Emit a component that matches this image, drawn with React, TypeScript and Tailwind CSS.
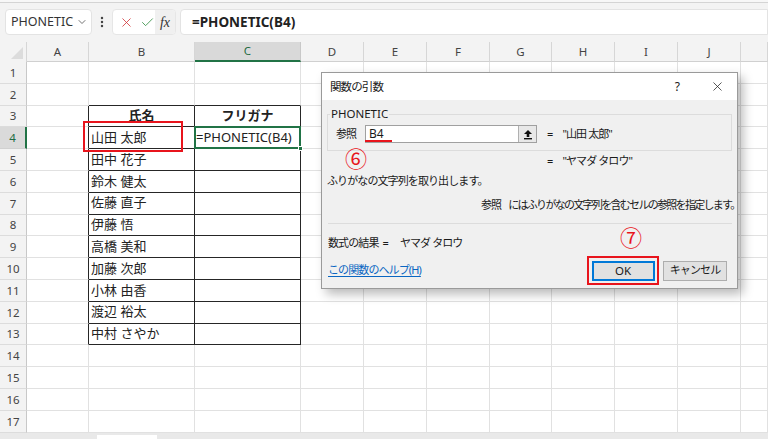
import React from 'react'
import { ChevronDown, EllipsisVertical, X, Check } from 'lucide-react'

const names = [
  '山田 太郎',
  '田中 花子',
  '鈴木 健太',
  '佐藤 直子',
  '伊藤 悟',
  '高橋 美和',
  '加藤 次郎',
  '小林 由香',
  '渡辺 裕太',
  '中村 さやか',
]

const cols = ['A', 'B', 'C', 'D', 'E', 'F', 'G', 'H', 'I', 'J', '']
const gridCols =
  'grid grid-cols-[27px_62px_106px_106px_63px_63px_63px_62px_63px_63px_63px_1fr]'

const UploadIcon = () => (
  <svg width="10" height="11" viewBox="0 0 10 11">
    <path d="M5 1 L9 5 L6.3 5 L6.3 8 L3.7 8 L3.7 5 L1 5 Z" fill="#111" />
    <rect x="1" y="9" width="8" height="1.4" fill="#111" />
  </svg>
)

const Cell: React.FC<{ row: number; col: number }> = ({ row, col }) => {
  // col: 0=A, 1=B, 2=C ...
  const inTable = row >= 3 && row <= 13
  const rightBlack = inTable && col <= 2
  const bottomBlack = row >= 2 && row <= 13 && (col === 1 || col === 2)
  const cls = [
    'relative border-r border-b bg-white flex items-center text-[13px] text-[#222] whitespace-nowrap',
    rightBlack ? 'border-r-[#262626]' : 'border-r-[#e1e1e1]',
    bottomBlack ? 'border-b-[#262626]' : 'border-b-[#e1e1e1]',
  ].join(' ')

  let content: React.ReactNode = null
  if (row === 3 && col === 1) content = <span className="w-full text-center font-bold">氏名</span>
  if (row === 3 && col === 2) content = <span className="w-full text-center font-bold">フリガナ</span>
  if (row >= 4 && row <= 13 && col === 1) content = <span className="pl-[2px]">{names[row - 4]}</span>
  if (row === 4 && col === 2) content = <span className="pl-[1px] text-[13px]">=PHONETIC(B4)</span>

  return (
    <div className={cls}>
      {content}
      {row === 4 && col === 1 && (
        <div className="absolute z-10 left-[-6px] top-[-6px] w-[100px] h-[31px] border-[2.5px] border-[#e8141c]" />
      )}
      {row === 4 && col === 2 && (
        <div className="absolute z-10 left-[-1px] top-[-1px] right-[-1px] bottom-[-1px] border-2 border-[#217346]">
          <div className="absolute right-[-4px] bottom-[-4px] w-[5px] h-[5px] bg-[#217346] border border-white" />
        </div>
      )}
    </div>
  )
}

const Dialog: React.FC = () => (
  <div className="absolute z-20 left-[321px] top-[72px] w-[417px] h-[217px] bg-[#f0f0f0] border border-[#9a9a9a] shadow-[5px_5px_10px_rgba(0,0,0,0.28)] text-[11px] tracking-[-0.9px] text-[#1a1a1a] whitespace-nowrap">
    <div className="h-[27px] bg-white flex items-center pl-[8px] pr-[12px]">
      <span className="text-[11.5px]">関数の引数</span>
      <span className="ml-auto mr-[30px] text-[12px] tracking-normal">?</span>
      <X size={15} strokeWidth={1.2} className="text-[#222]" />
    </div>

    <div className="px-[5px] pt-[14px]">
      <div className="relative h-[37px] border border-[#dcdcdc] flex items-center pl-[8px]">
        <span className="absolute left-[2px] top-[-8px] px-[1px] bg-[#f0f0f0] text-[11.5px] leading-[14px] tracking-normal">PHONETIC</span>
        <span className="w-[29px] mt-[3px]">参照</span>
        <div className="mt-[3px] flex h-[18px] w-[172px] border border-[#a0a0a0] bg-white">
          <div className="relative flex-1 flex items-center pl-[3px] text-[12px] tracking-normal">
            B4
            <div className="absolute left-[-1px] bottom-[0px] w-[27px] h-[2px] bg-[#e8141c]" />
          </div>
          <div className="w-[18px] border-l border-[#b0b0b0] bg-[#e8e8e8] flex items-center justify-center">
            <UploadIcon />
          </div>
        </div>
        <span className="mt-[3px] ml-[10px]">=</span>
        <span className="mt-[3px] ml-[10px]">"山田 太郎"</span>
      </div>

      <div className="relative h-[20px] flex items-center pl-[220px]">
        <span>=</span>
        <span className="ml-[10px]">"ヤマダ タロウ"</span>
        <span className="absolute left-[18px] top-[-5px] text-[22px] leading-[24px] tracking-normal text-[#e8141c]">⑥</span>
      </div>

      <div className="h-[20px] flex items-center">ふりがなの文字列を取り出します。</div>

      <div className="h-[26px] flex items-center pl-[154px] pt-[3px]">
        <span>参照</span>
        <span className="ml-[7px] tracking-[-1.7px]">にはふりがなの文字列を含むセルの参照を指定します。</span>
      </div>

      <div className="mt-[6px] ml-[1px] border-t border-[#dcdcdc]" />

      <div className="h-[20px] mt-[9px] flex items-center pl-[1px]">
        <span>数式の結果</span>
        <span className="ml-[4px]">=</span>
        <span className="ml-[12px]">ヤマダ タロウ</span>
      </div>

      <div className="relative h-[29px] mt-[3px] flex items-center pl-[1px]">
        <span className="text-[#0a66c2] underline underline-offset-2">この関数のヘルプ(H)</span>
        <span className="absolute left-[293px] top-[-31px] text-[22px] leading-[24px] tracking-normal text-[#e8141c]">⑦</span>
        <div className="ml-auto mr-[5px] flex items-center gap-[4px]">
          <div className="border-[2.5px] border-[#e8141c] p-[2.5px]">
            <div className="w-[63px] h-[20px] border border-[#0078d7] ring-1 ring-inset ring-[#0078d7] bg-[#e1e1e1] flex items-center justify-center text-[11.5px] tracking-normal">
              OK
            </div>
          </div>
          <div className="w-[64px] h-[20px] border border-[#adadad] bg-[#e1e1e1] flex items-center justify-center">
            キャンセル
          </div>
        </div>
      </div>
    </div>
  </div>
)

export default function App() {
  return (
    <div className="relative w-[768px] h-[439px] overflow-hidden bg-[#f3f3f3] font-['Noto_Sans','Noto_Sans_CJK_JP',sans-serif]">
      {/* ribbon edge */}
      <div className="h-[3px] bg-[#f7f7f7] border-b border-[#d4d4d4]" />

      {/* formula bar */}
      <div className="mt-[6px] h-[26px] flex items-center pl-[5px]">
        <div className="w-[87px] h-[26px] bg-white rounded-[4px] border border-[#e3e3e3] flex items-center pl-[5px] pr-[3px] text-[12.5px] text-[#333]">
          <span>PHONETIC</span>
          <ChevronDown size={12} strokeWidth={1.5} className="ml-auto text-[#444]" />
        </div>
        <div className="w-[20px] flex justify-center">
          <EllipsisVertical size={14} strokeWidth={2.2} className="text-[#444]" />
        </div>
        <div className="w-[64px] h-[26px] bg-white rounded-[4px] border border-[#e6e6e6] flex items-center overflow-hidden">
          <X size={15} strokeWidth={1.3} className="ml-[6px] text-[#d13438]" />
          <Check size={15} strokeWidth={1.3} className="ml-[6px] text-[#2e8b3e]" />
          <div className="ml-auto h-full w-[20px] bg-[#f0f0f0] flex items-center justify-center font-['Liberation_Serif',serif] italic text-[14px] text-[#333]">
            fx
          </div>
        </div>
        <div className="ml-[4px] flex-1 h-[26px] bg-white rounded-l-[4px] border border-[#e3e3e3] flex items-center pl-[11px] text-[13.5px] font-bold text-[#222]">
          =PHONETIC(B4)
        </div>
      </div>

      {/* column headers */}
      <div className={`${gridCols} mt-[7px] h-[20px] text-[11.5px] text-[#444]`}>
        <div className="relative border-r border-[#d6d6d6] bg-[#f3f3f3]">
          <div className="absolute right-[3px] bottom-[3px] w-0 h-0 border-l-[12px] border-l-transparent border-b-[12px] border-b-[#dcdcdc]" />
        </div>
        {cols.map((c, i) =>
          i === 2 ? (
            <div key={i} className="flex items-center justify-center bg-[#d9d9d9] border-r border-[#c8c8c8] border-b-2 border-b-[#217346] text-[#1e6b42]">
              {c}
            </div>
          ) : (
            <div key={i} className="flex items-center justify-center border-r border-[#d6d6d6] border-b border-b-[#d0d0d0]">
              {c}
            </div>
          ),
        )}
      </div>

      {/* rows */}
      {Array.from({ length: 17 }, (_, r) => r + 1).map((row) => (
        <div key={row} className={`${gridCols} h-[21.8px]`}>
          {row === 4 ? (
            <div className="flex items-center justify-center bg-[#dadada] border-r-2 border-r-[#217346] border-b border-b-[#d0d0d0] text-[11.5px] text-[#1e6b42]">
              {row}
            </div>
          ) : (
            <div className="flex items-center justify-center bg-[#f3f3f3] border-r border-r-[#c8c8c8] border-b border-b-[#dcdcdc] text-[11.5px] text-[#444]">
              {row}
            </div>
          )}
          {cols.map((_, i) => (
            <Cell key={i} row={row} col={i} />
          ))}
        </div>
      ))}

      {/* sheet tabs */}
      <div className="h-[10px] bg-[#e9e9e9] flex pt-[2px] pl-[97px]">
        <div className="w-[60px] h-full bg-white" />
      </div>

      <Dialog />
    </div>
  )
}
